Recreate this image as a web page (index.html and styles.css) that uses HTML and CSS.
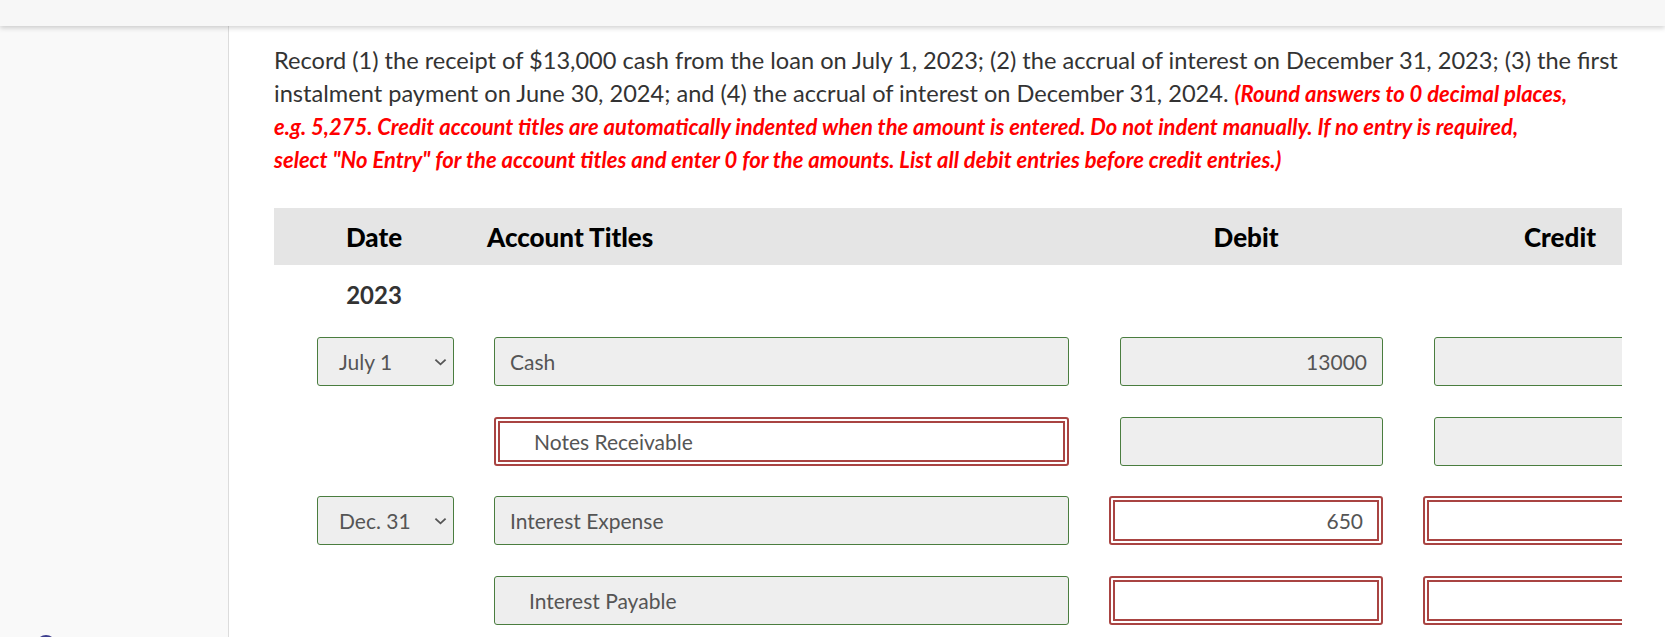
FILE: index.html
```html
<!DOCTYPE html>
<html lang="en">
<head>
<meta charset="utf-8">
<title>Journal entries</title>
<link rel="stylesheet" href="styles.css">
</head>
<body>
<div class="topbar"></div>
<div class="layout">
  <aside class="sidebar">
    <span class="help-icon"></span>
  </aside>
  <main class="content">
    <p class="question">Record (1) the receipt of $13,000 cash from the loan on July 1, 2023; (2) the accrual of interest on December 31, 2023; (3) the first<br>instalment payment on June 30, 2024; and (4) the accrual of interest on December 31, 2024. <em class="note">(Round answers to 0 decimal places,<br>e.g. 5,275. Credit account titles are automatically indented when the amount is entered. Do not indent manually. If no entry is required,<br>select "No Entry" for the account titles and enter 0 for the amounts. List all debit entries before credit entries.)</em></p>

    <div class="journal">
      <div class="grid head">
        <div class="h-date">Date</div>
        <div class="h-account">Account Titles</div>
        <div class="h-amount">Debit</div>
        <div class="h-amount">Credit</div>
      </div>

      <div class="grid year">
        <div class="h-date">2023</div>
      </div>

      <div class="entries">
        <div class="grid entry">
          <div class="date-cell">
            <div class="box select">July 1<svg class="chev" viewBox="0 0 14 8" width="13" height="8"><path d="M1.5 1.5 L7 6.5 L12.5 1.5" fill="none" stroke="#555" stroke-width="2"/></svg></div>
          </div>
          <div class="box">Cash</div>
          <div class="amt-cell"><div class="box num">13000</div></div>
          <div class="amt-cell"><div class="box num"></div></div>
        </div>

        <div class="grid entry">
          <div class="date-cell"></div>
          <div class="box err indent">Notes Receivable</div>
          <div class="amt-cell"><div class="box num"></div></div>
          <div class="amt-cell"><div class="box num"></div></div>
        </div>

        <div class="grid entry">
          <div class="date-cell">
            <div class="box select">Dec. 31<svg class="chev" viewBox="0 0 14 8" width="13" height="8"><path d="M1.5 1.5 L7 6.5 L12.5 1.5" fill="none" stroke="#555" stroke-width="2"/></svg></div>
          </div>
          <div class="box">Interest Expense</div>
          <div class="amt-cell"><div class="box num err">650</div></div>
          <div class="amt-cell"><div class="box num err"></div></div>
        </div>

        <div class="grid entry">
          <div class="date-cell"></div>
          <div class="box indent">Interest Payable</div>
          <div class="amt-cell"><div class="box num err"></div></div>
          <div class="amt-cell"><div class="box num err"></div></div>
        </div>
      </div>
    </div>
  </main>
</div>
</body>
</html>
```

FILE: styles.css
```css
html, body {
  margin: 0;
  padding: 0;
  height: 100%;
  overflow: hidden;
  background: #fff;
  font-family: Lato, "Open Sans", "Liberation Sans", sans-serif;
}

.topbar {
  position: relative;
  z-index: 2;
  height: 26px;
  background: #f7f7f7;
  box-shadow: 0 2px 5px rgba(0, 0, 0, 0.18);
}

.layout {
  display: flex;
  height: calc(100% - 26px);
}

.sidebar {
  position: relative;
  flex: 0 0 228px;
  background: #f9f9f9;
  border-right: 1px solid #dcdcdc;
}

.help-icon {
  position: absolute;
  left: 36px;
  top: 609px;
  width: 16px;
  height: 16px;
  border: 2px solid #3d3f8f;
  border-radius: 50%;
}

.content {
  flex: 1;
  padding: 17.5px 0 0 45px;
  min-width: 0;
}

.question {
  margin: 0;
  font-size: 23.6px;
  line-height: 33px;
  color: #333;
  white-space: nowrap;
}

.note {
  color: #ff0000;
  font-size: 22px;
  font-weight: 700;
  font-style: italic;
}

.journal {
  width: 1348px;
  margin-top: 32.5px;
  overflow: hidden;
}

.grid {
  display: grid;
  grid-template-columns: 220px 575px 314px 314px;
  width: 1423px;
}

.head {
  height: 57px;
  align-items: center;
  background: #e5e5e5;
  font-size: 26px;
  font-weight: 900;
  color: #000;
}

.h-date {
  width: 200px;
  text-align: center;
}

.h-account {
  margin-left: -7px;
}

.h-amount {
  padding-left: 40px;
  text-align: center;
}

.year {
  height: 58px;
  align-items: center;
  font-size: 24px;
  font-weight: 700;
  color: #333;
}

.entries {
  margin-top: 14px;
  display: flex;
  flex-direction: column;
  gap: 30.5px;
}

.entry {
  height: 49px;
}

.box {
  box-sizing: border-box;
  height: 49px;
  display: flex;
  align-items: center;
  padding: 0 15px;
  border: 1px solid #4a7d3f;
  border-radius: 3px;
  background: #eeeeee;
  font-size: 21px;
  color: #555;
  white-space: nowrap;
}

.box.indent {
  padding-left: 34px;
}

.box.err {
  border: 6px double #a94442;
  background: #fff;
}

.date-cell {
  padding-left: 43px;
}

.select {
  width: 137px;
  padding-left: 21px;
  justify-content: space-between;
  padding-right: 6px;
}

.chev {
  display: block;
}

.amt-cell {
  display: flex;
  justify-content: flex-end;
}

.box.num {
  width: 263px;
  justify-content: flex-end;
}

.box.num.err {
  width: 274px;
  padding-right: 14px;
}
```
